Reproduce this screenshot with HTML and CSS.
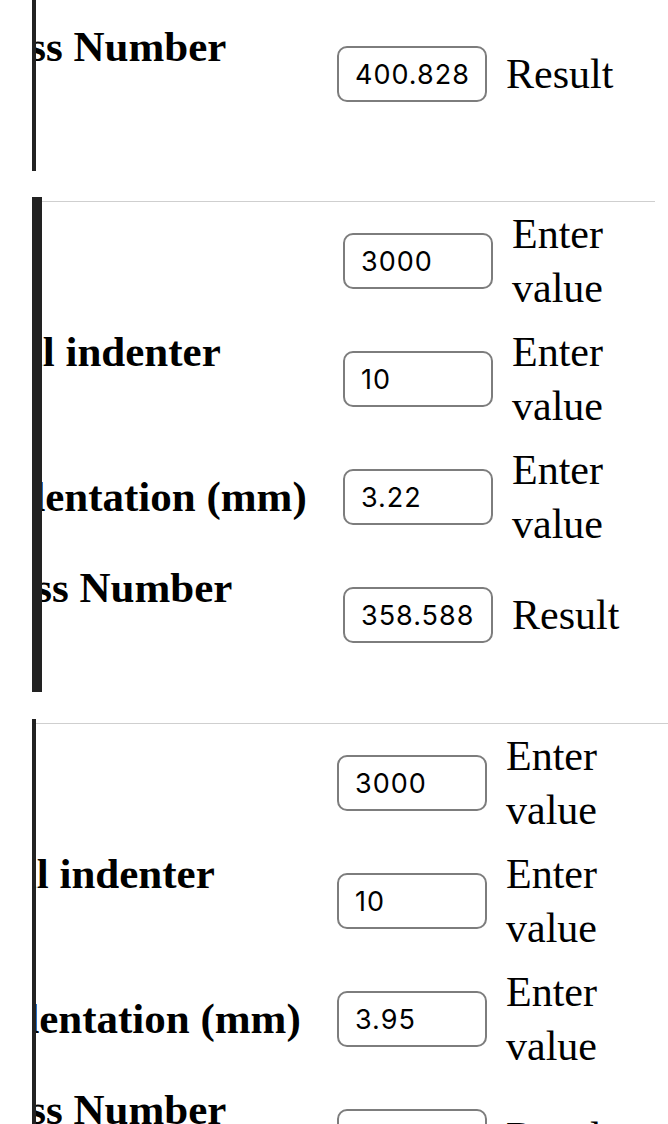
FILE: index.html
```html
<!DOCTYPE html>
<html lang="en">
<head>
  <meta charset="UTF-8">
  <meta name="viewport" content="width=device-width, initial-scale=1.0">
  <title>Brinell Hardness Calculator</title>
  <link rel="stylesheet" href="styles.css">
</head>
<body>
  <div class="page">
    <section class="calc calc--first">
      <div class="calc-body">
        <div class="calc-row">
          <label class="calc-label" for="load-1">Load (kgf)</label>
          <input class="calc-input" type="text" id="load-1" value="3000">
          <span class="calc-note">Enter value</span>
        </div>
        <div class="calc-row">
          <label class="calc-label" for="ball-1">Diameter of ball indenter (mm)</label>
          <input class="calc-input" type="text" id="ball-1" value="10">
          <span class="calc-note">Enter value</span>
        </div>
        <div class="calc-row">
          <label class="calc-label" for="dent-1">Diameter of indentation (mm)</label>
          <input class="calc-input" type="text" id="dent-1" value="3.05">
          <span class="calc-note">Enter value</span>
        </div>
        <div class="calc-row">
          <label class="calc-label" for="bhn-1">Brinell Hardness Number (BHN)</label>
          <input class="calc-input" type="text" id="bhn-1" value="400.828" readonly>
          <span class="calc-note">Result</span>
        </div>
      </div>
    </section>

    <section class="calc calc--active">
      <div class="calc-body">
        <div class="calc-row">
          <label class="calc-label" for="load-2">Load (kgf)</label>
          <input class="calc-input" type="text" id="load-2" value="3000">
          <span class="calc-note">Enter value</span>
        </div>
        <div class="calc-row">
          <label class="calc-label" for="ball-2">Diameter of ball indenter (mm)</label>
          <input class="calc-input" type="text" id="ball-2" value="10">
          <span class="calc-note">Enter value</span>
        </div>
        <div class="calc-row">
          <label class="calc-label" for="dent-2">Diameter of indentation (mm)</label>
          <input class="calc-input" type="text" id="dent-2" value="3.22">
          <span class="calc-note">Enter value</span>
        </div>
        <div class="calc-row">
          <label class="calc-label" for="bhn-2">Brinell Hardness Number (BHN)</label>
          <input class="calc-input" type="text" id="bhn-2" value="358.588" readonly>
          <span class="calc-note">Result</span>
        </div>
      </div>
    </section>

    <section class="calc">
      <div class="calc-body">
        <div class="calc-row">
          <label class="calc-label" for="load-3">Load (kgf)</label>
          <input class="calc-input" type="text" id="load-3" value="3000">
          <span class="calc-note">Enter value</span>
        </div>
        <div class="calc-row">
          <label class="calc-label" for="ball-3">Diameter of ball indenter (mm)</label>
          <input class="calc-input" type="text" id="ball-3" value="10">
          <span class="calc-note">Enter value</span>
        </div>
        <div class="calc-row">
          <label class="calc-label" for="dent-3">Diameter of indentation (mm)</label>
          <input class="calc-input" type="text" id="dent-3" value="3.95">
          <span class="calc-note">Enter value</span>
        </div>
        <div class="calc-row">
          <label class="calc-label" for="bhn-3">Brinell Hardness Number (BHN)</label>
          <input class="calc-input" type="text" id="bhn-3" value="234.861" readonly>
          <span class="calc-note">Result</span>
        </div>
      </div>
    </section>
  </div>
</body>
</html>
```

FILE: styles.css
```css
:root {
  --text-color: #000;
  --bar-color: #222;
  --rule-color: #cfcfcf;
  --input-border: #7d7d7d;
}

body {
  margin: 0;
  background: #fff;
  color: var(--text-color);
  font-family: 'Liberation Serif', 'Times New Roman', serif;
}

/* the page is shown scrolled part way down */
.page {
  margin-top: -344px;
  padding-left: 32px;
}

.calc {
  border-left: 4px solid var(--bar-color);
  overflow: hidden;
  padding: 4px 0 18px;
  margin-bottom: 26px;
}

.calc--first {
  padding-bottom: 38px;
}

.calc--active {
  border-left-width: 10px;
  margin-right: 13px;
  margin-bottom: 27px;
}

/* rows are wider than the card, scrolled sideways */
.calc-body {
  margin-left: -285px;
  border-top: 1px solid var(--rule-color);
}

.calc-row {
  display: grid;
  grid-template-columns: 567px 150px 140px;
  column-gap: 19px;
  align-items: center;
  padding: 5px 0;
}

.calc-label {
  display: block;
  font-size: 43px;
  font-weight: bold;
  line-height: 54px;
}

.calc-input {
  box-sizing: border-box;
  width: 150px;
  height: 56px;
  padding: 0 16px;
  border: 2px solid var(--input-border);
  border-radius: 10px;
  background: #fff;
  color: var(--text-color);
  font-family: Inter, 'Liberation Sans', sans-serif;
  font-size: 27px;
  letter-spacing: 1px;
}

.calc-note {
  font-size: 42px;
  line-height: 54px;
}
```
